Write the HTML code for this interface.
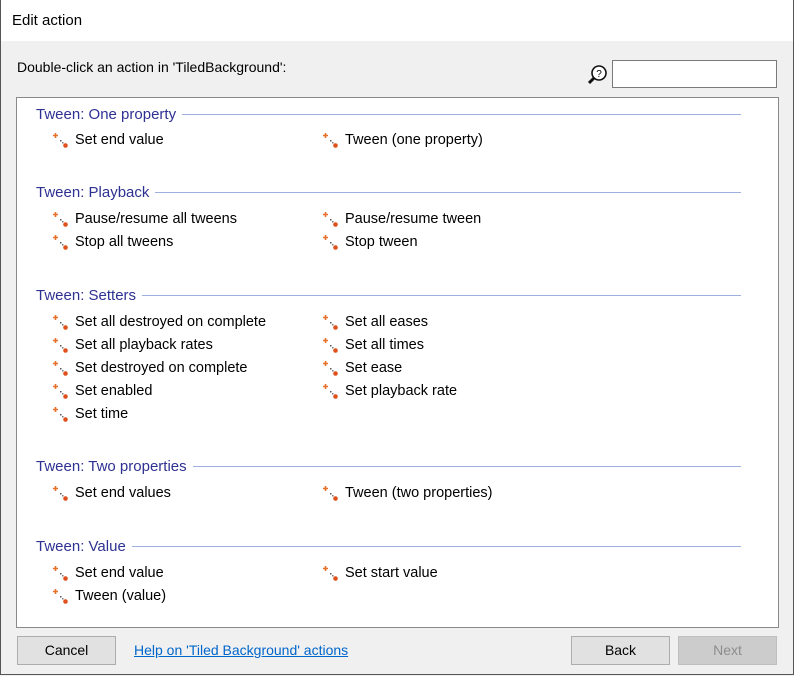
<!DOCTYPE html>
<html><head><meta charset="utf-8"><style>
body{margin:0;width:794px;height:676px;overflow:hidden;background:#f0f0f0;font-family:"Liberation Sans",sans-serif;font-size:14px;color:#000;position:relative}
.frame{position:absolute;left:0;top:0;width:792px;height:674px;border:1px solid #555;border-top:none;}
.title{position:absolute;left:0;top:0;width:794px;height:41px;background:#fff}
.abs{position:absolute;white-space:nowrap}
.panel{position:absolute;left:16px;top:97px;width:761px;height:529px;background:#fff;border:1px solid #8a8a8a}
.hdr{position:absolute;left:19px;right:37px;height:18px;display:flex;align-items:center;color:#2e3192;font-size:15px}
.hdr span{padding-right:6px}
.hdr i{flex:1;height:1px;background:#9fb0e0}
.it{position:absolute;white-space:nowrap;font-size:14.5px}
.it svg{position:absolute;left:-23px;top:0}
.btn{position:absolute;top:636px;height:27px;border:1px solid #adadad;background:#e1e1e1;text-align:center;line-height:27px;font-size:14px}
</style></head><body>
<div class="title"></div>
<div class="abs" style="left:12px;top:12px;font-size:15px">Edit action</div>
<div class="abs" style="left:17px;top:59px">Double-click an action in 'TiledBackground':</div>
<svg class="abs" style="left:587px;top:63px" width="22" height="22" viewBox="0 0 22 22"><circle cx="12" cy="10" r="7" fill="#fff" stroke="#111" stroke-width="1.6"/><text x="12" y="14" font-size="10" text-anchor="middle" font-family="Liberation Sans">?</text><line x1="7" y1="15" x2="2" y2="20" stroke="#111" stroke-width="3"/></svg>
<div class="abs" style="left:612px;top:60px;width:163px;height:26px;background:#fff;border:1px solid #7a7a7a"></div>
<div class="panel">
<svg width="0" height="0" style="position:absolute"><defs><g id="ic"><path d="M3.5 1v5M1 3.5h5" stroke="#e8702a" stroke-width="1.6"/><rect x="8" y="8" width="1.5" height="1.5" fill="#555"/><rect x="10" y="10" width="1.5" height="1.5" fill="#777"/><circle cx="13.5" cy="13.5" r="2.3" fill="#e0501a"/></g></defs></svg>
</div>
<div id="c" style="position:absolute;left:17px;top:98px;width:761px;height:529px">
<div class="hdr" style="top:7px"><span>Tween: One property</span><i></i></div>
<div class="hdr" style="top:85px"><span>Tween: Playback</span><i></i></div>
<div class="hdr" style="top:188px"><span>Tween: Setters</span><i></i></div>
<div class="hdr" style="top:359px"><span>Tween: Two properties</span><i></i></div>
<div class="hdr" style="top:439px"><span>Tween: Value</span><i></i></div>
</div>
<div id="items" style="position:absolute;left:0;top:0"></div>
<script>
var L=[[75,131,"Set end value"],[345,131,"Tween (one property)"],
[75,210,"Pause/resume all tweens"],[345,210,"Pause/resume tween"],[75,233,"Stop all tweens"],[345,233,"Stop tween"],
[75,313,"Set all destroyed on complete"],[345,313,"Set all eases"],[75,336,"Set all playback rates"],[345,336,"Set all times"],[75,359,"Set destroyed on complete"],[345,359,"Set ease"],[75,382,"Set enabled"],[345,382,"Set playback rate"],[75,405,"Set time"],
[75,484,"Set end values"],[345,484,"Tween (two properties)"],
[75,564,"Set end value"],[345,564,"Set start value"],[75,587,"Tween (value)"]];
var h="";L.forEach(function(a){h+='<div class="it" style="left:'+a[0]+'px;top:'+(a[1]+1)+'px"><svg width="17" height="17" viewBox="0 0 17 17"><use href="#ic"/></svg>'+a[2]+'</div>';});
document.getElementById("items").innerHTML=h;
</script>
<div class="btn" style="left:17px;width:97px">Cancel</div>
<div class="abs" style="left:134px;top:642px;color:#0066cc;text-decoration:underline">Help on 'Tiled Background' actions</div>
<div class="btn" style="left:571px;width:97px">Back</div>
<div class="btn" style="left:678px;width:97px;background:#ccc;border-color:#bfbfbf;color:#8d8d8d">Next</div>
<div class="frame"></div>
</body></html>
